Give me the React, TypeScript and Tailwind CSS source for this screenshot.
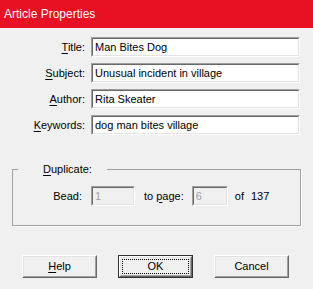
import React from 'react';

const font = { fontFamily: '"Liberation Sans", Arial, sans-serif' };

function Field({ value, disabled, w }: { value: string; disabled?: boolean; w: string }) {
  return (
    <div className={`${w} h-[20px] border border-t-[#a0a0a0] border-l-[#a0a0a0] border-b-white border-r-white`}>
      <div
        className={`h-full border border-t-[#696969] border-l-[#696969] border-b-[#e3e3e3] border-r-[#e3e3e3] pl-[2px] flex items-center text-[11px] leading-none ${
          disabled ? 'bg-[#f0f0f0] text-[#a0a0a0]' : 'bg-white text-black'
        }`}
      >
        {value}
      </div>
    </div>
  );
}

function Row({ u, rest, value }: { u: string; rest: string; value: string }) {
  return (
    <div className="flex items-center h-[20px]">
      <div className="w-[85px] text-right text-[11px] text-black">
        <span className="underline underline-offset-2">{u}</span>
        {rest}
      </div>
      <div className="ml-[6px]">
        <Field value={value} w="w-[209px]" />
      </div>
    </div>
  );
}

function Btn({ children, def }: { children: React.ReactNode; def?: boolean }) {
  return (
    <div className={`w-[75px] h-[23px] ${def ? 'border border-[#303030]' : ''}`}>
      <div className="h-full border border-t-white border-l-white border-b-[#696969] border-r-[#696969]">
        <div className="h-full border border-t-[#e3e3e3] border-l-[#e3e3e3] border-b-[#a0a0a0] border-r-[#a0a0a0] bg-[#f0f0f0] flex items-center justify-center text-[11px] text-black">
          {def ? (
            <div className="w-full h-full p-[1px]">
              <div className="w-full h-full border border-dotted border-black flex items-center justify-center">
                {children}
              </div>
            </div>
          ) : (
            children
          )}
        </div>
      </div>
    </div>
  );
}

export default function App() {
  return (
    <div className="w-[313px] h-[289px] bg-[#f0f0f0] flex flex-col overflow-hidden" style={font}>
      <div className="h-[28px] bg-[#e81123] flex items-center pl-[4px] text-white text-[12px]">
        Article Properties
      </div>

      <div className="flex flex-col gap-[6px] pt-[9px]">
        <Row u="T" rest="itle:" value="Man Bites Dog" />
        <Row u="S" rest="ubject:" value="Unusual incident in village" />
        <Row u="A" rest="uthor:" value="Rita Skeater" />
        <Row u="K" rest="eywords:" value="dog man bites village" />
      </div>

      <fieldset className="mt-[27px] ml-[12px] w-[289px] h-[64px] border border-[#a0a0a0] shadow-[1px_1px_0_#ffffff]">
        <legend className="ml-[5px] pl-[25px] pr-[15px] text-[11px] leading-[14px] text-black">
          <span className="underline underline-offset-2">D</span>uplicate:
        </legend>
        <div className="flex items-center mt-[10px] text-[11px] text-black">
          <span className="w-[69px] text-right">Bead:</span>
          <div className="ml-[9px]">
            <Field value="1" disabled w="w-[44px]" />
          </div>
          <span className="ml-[9px]">
            to <span className="underline underline-offset-2">p</span>age:
          </span>
          <div className="ml-[8px]">
            <Field value="6" disabled w="w-[36px]" />
          </div>
          <span className="ml-[7px]">of</span>
          <span className="ml-[7px]">137</span>
        </div>
      </fieldset>

      <div className="flex gap-[21px] pl-[22px] mt-[29px]">
        <Btn>
          <span>
            <span className="underline underline-offset-2">H</span>elp
          </span>
        </Btn>
        <Btn def>OK</Btn>
        <Btn>Cancel</Btn>
      </div>
    </div>
  );
}
